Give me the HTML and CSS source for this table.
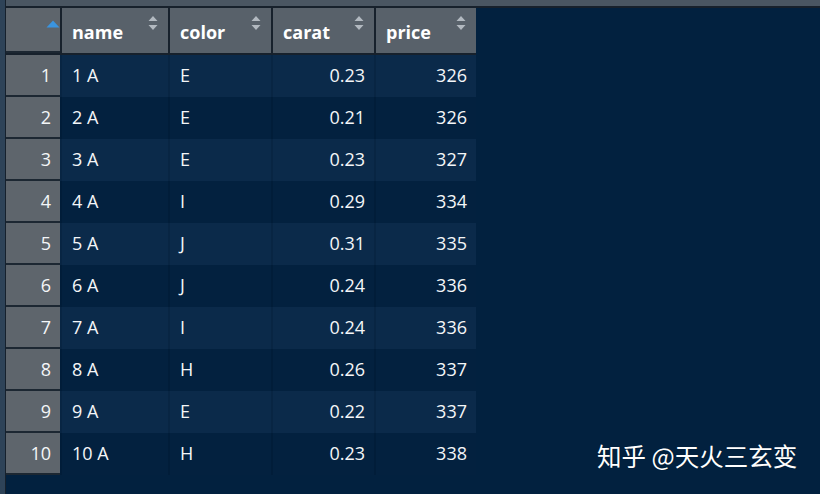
FILE: index.html
```html
<!DOCTYPE html>
<html>
<head>
<meta charset="utf-8">
<link rel="stylesheet" href="styles.css">
</head>
<body>
<div class="frame">
  <div class="strip"></div>
  <div class="main">
    <div class="topbar"></div>
    <div class="table">
      <div class="row head">
        <div class="hc idx"><svg class="asc" width="14" height="8" viewBox="0 0 14 8"><path d="M7 0.5 L13.5 7.5 L0.5 7.5 Z" fill="#3a94df"/></svg></div>
        <div class="hc"><span>name</span><svg class="sort" width="10" height="16" viewBox="0 0 10 16"><path d="M5 1 L9.5 6 L0.5 6 Z M5 15 L9.5 10 L0.5 10 Z" fill="#b2b9c0"/></svg></div>
        <div class="hc"><span>color</span><svg class="sort" width="10" height="16" viewBox="0 0 10 16"><path d="M5 1 L9.5 6 L0.5 6 Z M5 15 L9.5 10 L0.5 10 Z" fill="#b2b9c0"/></svg></div>
        <div class="hc"><span>carat</span><svg class="sort" width="10" height="16" viewBox="0 0 10 16"><path d="M5 1 L9.5 6 L0.5 6 Z M5 15 L9.5 10 L0.5 10 Z" fill="#b2b9c0"/></svg></div>
        <div class="hc"><span>price</span><svg class="sort" width="10" height="16" viewBox="0 0 10 16"><path d="M5 1 L9.5 6 L0.5 6 Z M5 15 L9.5 10 L0.5 10 Z" fill="#b2b9c0"/></svg></div>
      </div>
      <div class="row odd"><div class="idx">1</div><div class="c">1 A</div><div class="c">E</div><div class="c num">0.23</div><div class="c num">326</div></div>
      <div class="row even"><div class="idx">2</div><div class="c">2 A</div><div class="c">E</div><div class="c num">0.21</div><div class="c num">326</div></div>
      <div class="row odd"><div class="idx">3</div><div class="c">3 A</div><div class="c">E</div><div class="c num">0.23</div><div class="c num">327</div></div>
      <div class="row even"><div class="idx">4</div><div class="c">4 A</div><div class="c">I</div><div class="c num">0.29</div><div class="c num">334</div></div>
      <div class="row odd"><div class="idx">5</div><div class="c">5 A</div><div class="c">J</div><div class="c num">0.31</div><div class="c num">335</div></div>
      <div class="row even"><div class="idx">6</div><div class="c">6 A</div><div class="c">J</div><div class="c num">0.24</div><div class="c num">336</div></div>
      <div class="row odd"><div class="idx">7</div><div class="c">7 A</div><div class="c">I</div><div class="c num">0.24</div><div class="c num">336</div></div>
      <div class="row even"><div class="idx">8</div><div class="c">8 A</div><div class="c">H</div><div class="c num">0.26</div><div class="c num">337</div></div>
      <div class="row odd"><div class="idx">9</div><div class="c">9 A</div><div class="c">E</div><div class="c num">0.22</div><div class="c num">337</div></div>
      <div class="row even"><div class="idx">10</div><div class="c">10 A</div><div class="c">H</div><div class="c num">0.23</div><div class="c num">338</div></div>
    </div>
  </div>
</div>
<div class="watermark">知乎 @天火三玄变</div>
</body>
</html>
```
FILE: styles.css
```css
html, body {
  margin: 0;
  padding: 0;
  background: #02213f;
  font-family: "Open Sans", "Noto Sans", sans-serif;
  color: #f4f6f8;
}
.frame {
  display: flex;
  height: 494px;
  overflow: hidden;
}
.strip {
  width: 5px;
  background: #2e4358;
  border-right: 1px solid #16212d;
  flex: none;
}
.main {
  flex: 1;
  display: flex;
  flex-direction: column;
}
.topbar {
  height: 6px;
  background: #4a5662;
  border-bottom: 2px solid #17212c;
}
.table {
  display: flex;
  flex-direction: column;
  width: 470px;
}
.row {
  display: grid;
  grid-template-columns: 54px 106px 101px 101px 100px;
  column-gap: 2px;
  height: 42px;
  font-size: 18px;
  font-weight: 500;
}
.row.head {
  height: 45px;
  background: #17212c;
  border-bottom: 2px solid #17212c;
}
.hc {
  background: #58616a;
  position: relative;
  font-weight: 700;
  color: #ffffff;
  padding-left: 10px;
  display: flex;
  align-items: center;
  padding-top: 3px;
  box-sizing: border-box;
}
.hc.idx {
  padding: 0;
}
.asc {
  position: absolute;
  left: 40px;
  top: 12px;
}
.sort {
  position: absolute;
  right: 10px;
  top: 7px;
}
.row .idx {
  background: #5e656c;
  border-bottom: 2px solid #1c2732;
  text-align: right;
  padding-right: 9px;
  box-sizing: border-box;
  display: flex;
  align-items: center;
  justify-content: flex-end;
}
.row.odd { background: #082543; }
.row.even { background: #011d39; }
.row.odd .c { background: #0b2a4a; }
.row.even .c { background: #03213f; }
.c {
  display: flex;
  align-items: center;
  padding-left: 10px;
  padding-bottom: 2px;
  box-sizing: border-box;
}
.c.num {
  justify-content: flex-end;
  padding-left: 0;
  padding-right: 9px;
}
.watermark {
  position: absolute;
  left: 597px;
  top: 438px;
  font-family: "Noto Sans CJK SC", sans-serif;
  font-size: 24.5px;
  color: #ffffff;
  text-shadow: 0 0 1px rgba(0,0,0,0.4);
  white-space: nowrap;
}
```
